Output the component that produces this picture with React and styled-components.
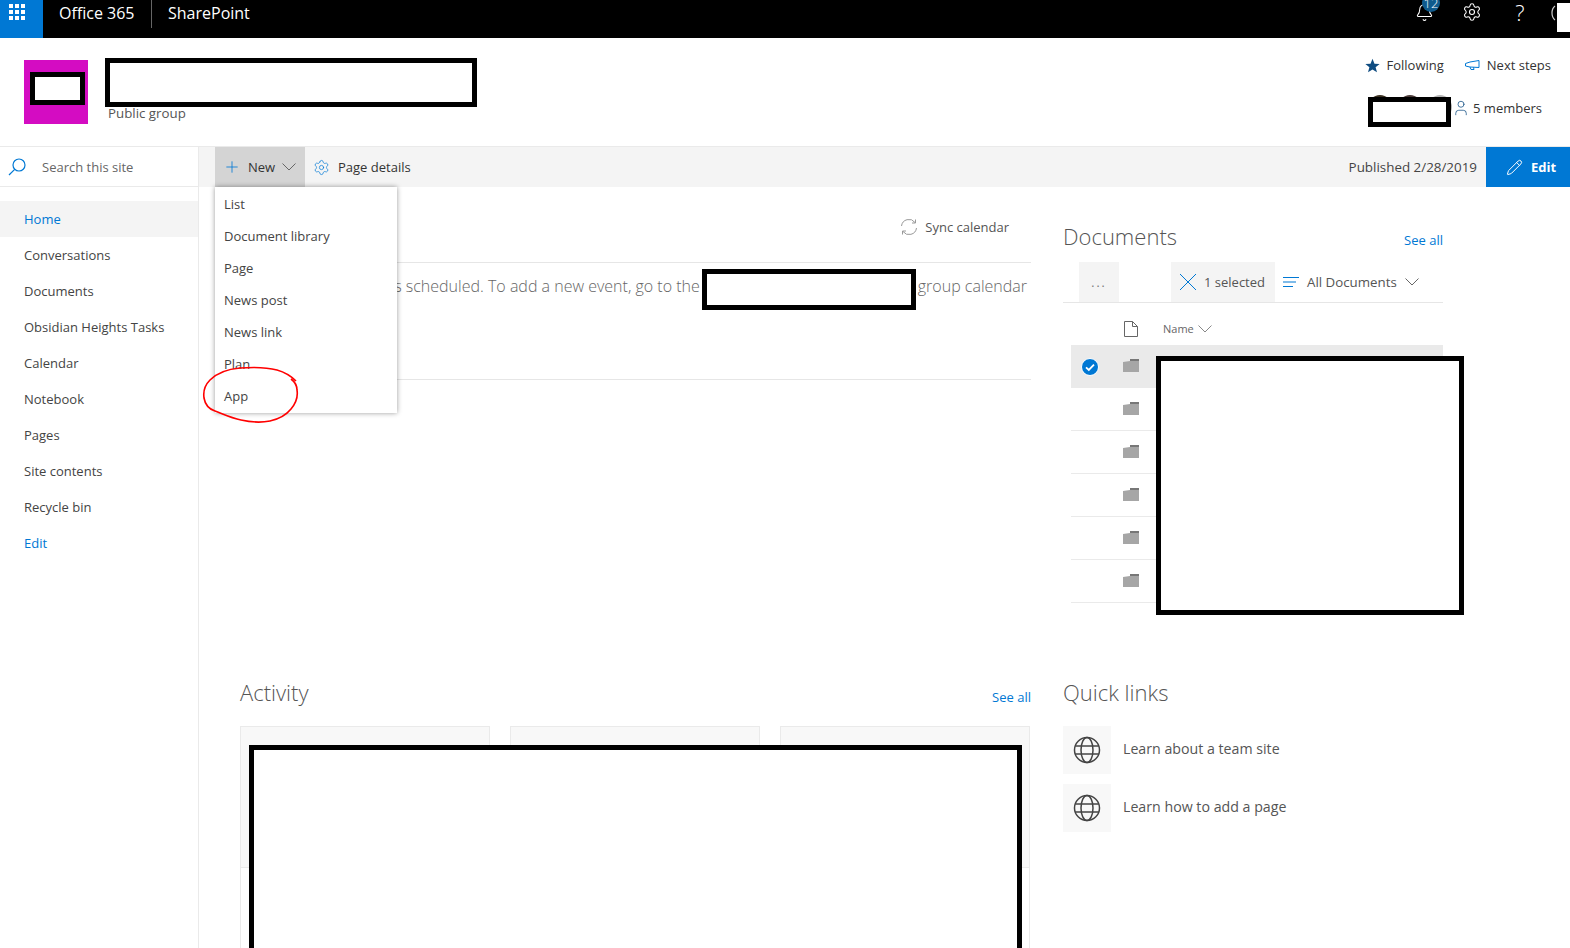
import React from "react";
import styled, { createGlobalStyle } from "styled-components";
import { Plus, Settings, Bell, Pencil, User } from "lucide-react";

const GlobalStyle = createGlobalStyle`
    html, body {
        margin: 0;
        padding: 0;
        background: #fff;
    }
    body {
        font-family: "Open Sans", "Noto Sans", sans-serif;
        color: #333;
    }
`;

const Page = styled.div`
    position: relative;
    width: 1570px;
    height: 948px;
    overflow: hidden;
    display: flex;
    flex-direction: column;
`;

/* suite bar */
const TopBar = styled.header`
    height: 38px;
    flex: none;
    background: #000;
    color: #fff;
    display: flex;
    align-items: stretch;
`;

const Waffle = styled.div`
    width: 43px;
    background: #0078d4;
    display: grid;
    grid-template-columns: repeat(3, 4px);
    grid-auto-rows: 4px;
    gap: 2px;
    padding: 4px 0 0 9px;
    box-sizing: border-box;
    align-content: start;
`;

const Dot = styled.span`
    background: #fff;
`;

const BrandOffice = styled.div`
    margin-left: 16px;
    width: 92px;
    height: 28px;
    line-height: 27px;
    font-size: 16px;
    border-right: 1px solid #666;
`;

const BrandApp = styled.div`
    margin-left: 16px;
    line-height: 27px;
    height: 28px;
    font-size: 16px;
`;

const TopIcons = styled.div`
    margin-left: auto;
    display: flex;
    align-items: flex-start;
`;

const TopIcon = styled.div`
    position: relative;
    width: 48px;
    height: 24px;
    display: flex;
    align-items: center;
    justify-content: center;
    font-size: 22px;
    font-weight: 300;
    line-height: 24px;
`;

const Badge = styled.span`
    position: absolute;
    left: 22px;
    top: -6px;
    width: 18px;
    height: 18px;
    border-radius: 50%;
    background: #0f5a8c;
    color: #fff;
    font-size: 13px;
    line-height: 18px;
    text-align: center;
`;

const AvatarSliver = styled.div`
    width: 13px;
    height: 24px;
    display: flex;
    justify-content: flex-end;
    align-items: flex-start;
    padding: 5px 1px 0 0;
    box-sizing: border-box;
`;

const WhiteBlock = styled.div`
    width: 13px;
    height: 29px;
    margin-top: 3px;
    background: #fff;
`;

/* redaction boxes painted over the screenshot */
const Redaction = styled.div`
    box-sizing: border-box;
    background: #fff;
    border: 5px solid #000;
    flex: none;
`;

const OverlayRedaction = styled(Redaction)`
    position: absolute;
    left: ${(p) => p.$left}px;
    top: ${(p) => p.$top}px;
    width: ${(p) => p.$width}px;
    height: ${(p) => p.$height}px;
`;

/* site header */
const SiteHeader = styled.div`
    height: 109px;
    flex: none;
    box-sizing: border-box;
    border-bottom: 1px solid #eaeaea;
    padding: 22px 19px 0 24px;
    display: flex;
    position: relative;
`;

const Logo = styled.div`
    width: 64px;
    height: 64px;
    background: #d40cc2;
    padding: 12px 0 0 6px;
    box-sizing: border-box;
`;

const LogoBox = styled(Redaction)`
    width: 55px;
    height: 33px;
`;

const SiteTitle = styled.div`
    margin-left: 17px;
    margin-top: -2px;
    display: flex;
    flex-direction: column;
`;

const TitleBox = styled(Redaction)`
    width: 372px;
    height: 49px;
`;

const GroupLabel = styled.div`
    margin-left: 3px;
    font-size: 13.3px;
    line-height: 13px;
    color: #555;
`;

const SiteActions = styled.div`
    margin-left: auto;
    display: flex;
    flex-direction: column;
    align-items: flex-end;
`;

const ActionRow = styled.div`
    display: flex;
    align-items: center;
    height: 20px;
    margin-top: -5px;
`;

const ActionLink = styled.span`
    display: flex;
    align-items: center;
    gap: 7px;
    margin-left: ${(p) => p.$ml || 0}px;
    font-size: 13px;
    color: #333;
`;

const MembersRow = styled.div`
    position: relative;
    display: flex;
    align-items: center;
    height: 20px;
    margin-top: 23px;
    margin-right: 9px;
    font-size: 13px;
    color: #333;
`;

const Avatars = styled.div`
    display: flex;
    gap: 6px;
    align-self: flex-start;
    margin-top: -3px;
`;

const Avatar = styled.span`
    width: 24px;
    height: 24px;
    border-radius: 50%;
    background: ${(p) => p.$color};
`;

const MemberText = styled.span`
    display: flex;
    align-items: center;
    gap: 3px;
    position: relative;
`;

/* body */
const Body = styled.div`
    flex: 1;
    display: grid;
    grid-template-columns: 199px 1fr;
    min-height: 0;
`;

const Sidebar = styled.nav`
    border-right: 1px solid #eaeaea;
`;

const SearchRow = styled.div`
    height: 40px;
    box-sizing: border-box;
    border-bottom: 1px solid #eaeaea;
    display: flex;
    align-items: center;
    padding-left: 7px;
    gap: 15px;
    font-size: 13px;
    color: #666;
`;

const NavList = styled.div`
    margin-top: 14px;
`;

const NavItem = styled.div`
    height: 36px;
    line-height: 36px;
    padding-left: 24px;
    font-size: 13px;
    color: ${(p) => (p.$link ? "#0078d4" : "#444")};
    background: ${(p) => (p.$active ? "#f4f4f4" : "transparent")};
`;

const MainColumn = styled.main`
    position: relative;
    min-width: 0;
`;

const CommandBar = styled.div`
    height: 40px;
    background: #f4f4f4;
    display: flex;
    align-items: stretch;
    padding-left: 16px;
    font-size: 13px;
    color: #333;
`;

const NewButton = styled.div`
    width: 90px;
    box-sizing: border-box;
    background: #d4d4d4;
    display: flex;
    align-items: center;
    padding-left: 8px;
    gap: 7px;
`;

const PageDetails = styled.div`
    display: flex;
    align-items: center;
    gap: 8px;
    margin-left: 8px;
`;

const Published = styled.div`
    margin-left: auto;
    margin-right: 9px;
    display: flex;
    align-items: center;
    font-size: 13.4px;
    color: #444;
`;

const EditButton = styled.div`
    width: 84px;
    background: #0078d4;
    color: #fff;
    font-weight: 700;
    display: flex;
    align-items: center;
    padding-left: 20px;
    box-sizing: border-box;
    gap: 8px;
`;

const NewMenu = styled.div`
    position: absolute;
    left: 16px;
    top: 40px;
    width: 182px;
    height: 226px;
    box-sizing: border-box;
    background: #fff;
    padding-top: 1px;
    box-shadow: 0 0 5px rgba(0, 0, 0, 0.4);
    z-index: 2;
`;

const MenuItem = styled.div`
    height: 32px;
    line-height: 32px;
    padding-left: 9px;
    font-size: 13px;
    color: #444;
`;

const Content = styled.div`
    display: grid;
    grid-template-columns: 791px 380px;
    grid-template-rows: 489px 1fr;
    column-gap: 32px;
    padding-left: 41px;
`;

const EventsHeader = styled.div`
    height: 76px;
    box-sizing: border-box;
    border-bottom: 1px solid #e6e6e6;
    padding: 28px 22px 0 0;
    display: flex;
    justify-content: flex-end;
`;

const SyncLink = styled.span`
    display: flex;
    align-items: center;
    gap: 7px;
    height: 24px;
    font-size: 13px;
    color: #555;
`;

const EventsBody = styled.div`
    height: 117px;
    box-sizing: border-box;
    border-bottom: 1px solid #e6e6e6;
    padding: 6px 4px 0 0;
    display: flex;
    justify-content: flex-end;
    align-items: flex-start;
    overflow: hidden;
    white-space: nowrap;
    font-size: 16px;
    font-weight: 300;
    color: #666;
`;

const EventsText = styled.span`
    line-height: 34px;
`;

const CalendarBox = styled(Redaction)`
    width: 214px;
    height: 41px;
    margin: 0 2px;
`;

const DocsHeader = styled.div`
    height: 75px;
    box-sizing: border-box;
    padding-top: 33px;
    display: flex;
    justify-content: space-between;
    align-items: flex-start;
`;

const SectionTitle = styled.h2`
    margin: 0;
    font-size: 22px;
    line-height: 32px;
    font-weight: 300;
    color: #555;
`;

const SeeAll = styled.a`
    font-size: 13px;
    line-height: 18px;
    margin-top: ${(p) => p.$top || 11}px;
    color: #0078d4;
`;

const DocsToolbar = styled.div`
    height: 41px;
    box-sizing: border-box;
    border-bottom: 1px solid #e6e6e6;
    padding-left: 16px;
    display: flex;
    align-items: stretch;
    font-size: 13px;
    color: #555;
`;

const MoreButton = styled.div`
    width: 40px;
    background: #f4f4f4;
    display: flex;
    align-items: center;
    justify-content: center;
    font-size: 12px;
    letter-spacing: 2px;
    color: #777;
`;

const SelectedChip = styled.div`
    margin-left: 52px;
    width: 104px;
    box-sizing: border-box;
    background: #f4f4f4;
    display: flex;
    align-items: center;
    padding-left: 8px;
    gap: 7px;
`;

const ViewPicker = styled.div`
    margin-left: 8px;
    display: flex;
    align-items: center;
    gap: 8px;
    font-size: 13.3px;
`;

const ListHead = styled.div`
    height: 42px;
    box-sizing: border-box;
    padding-top: 9px;
    display: grid;
    grid-template-columns: 53px 39px 1fr;
    margin-left: 8px;
    align-items: center;
    font-size: 11px;
    color: #666;
`;

const HeadCell = styled.span`
    grid-column: ${(p) => p.$col};
    display: flex;
    align-items: center;
    gap: 4px;
`;

const DocList = styled.div`
    position: relative;
    margin-left: 8px;
`;

const DocRow = styled.div`
    height: 43px;
    box-sizing: border-box;
    display: grid;
    grid-template-columns: 52px 40px 1fr;
    padding-bottom: 2px;
    align-items: center;
    background: ${(p) => (p.$selected ? "#eaeaea" : "transparent")};
    border-bottom: ${(p) => (p.$selected ? "none" : "1px solid #eaeaea")};
`;

const CheckCell = styled.span`
    display: flex;
    padding: 2px 0 0 10px;
`;

const FolderCell = styled.span`
    grid-column: 2;
    display: flex;
`;

const ActivityCards = styled.div`
    position: relative;
    margin-top: 18px;
    display: grid;
    grid-template-columns: repeat(3, 250px);
    column-gap: 20px;
`;

const ActivityCard = styled.div`
    height: 260px;
    box-sizing: border-box;
    border: 1px solid #eaeaea;
`;

const CardPreview = styled.div`
    height: 140px;
    background: #f8f8f8;
    border-bottom: 1px solid #eaeaea;
`;

const SectionHead = styled.div`
    display: flex;
    justify-content: space-between;
    align-items: flex-start;
`;

const QuickList = styled.div`
    margin-top: 18px;
    display: flex;
    flex-direction: column;
    gap: 10px;
`;

const QuickLink = styled.div`
    display: flex;
    align-items: center;
    gap: 12px;
    font-size: 14.2px;
    color: #555;
`;

const QuickLabel = styled.span`
    margin-top: -4px;
`;

const QuickIcon = styled.div`
    width: 48px;
    height: 48px;
    background: #f8f8f8;
    display: flex;
    align-items: center;
    justify-content: center;
`;

const Annotation = styled.svg`
    position: absolute;
    left: 200px;
    top: 360px;
    z-index: 3;
    pointer-events: none;
`;

const FlatChevron = ({ color = "#666", width = 14 }) => (
    <svg width={width} height={width / 2 + 1} viewBox="0 0 14 8" fill="none" stroke={color} strokeWidth="1">
        <path d="M.5.5L7 7l6.5-6.5" />
    </svg>
);

const SearchIcon = () => (
    <svg width="20" height="20" viewBox="0 0 20 20" fill="none" stroke="#0078d4" strokeWidth="1.2">
        <circle cx="12" cy="8" r="6" />
        <path d="M7.7 12.3L2 18" />
    </svg>
);

const StarIcon = () => (
    <svg width="15" height="15" viewBox="0 0 16 16" fill="#0f4c81">
        <path d="M8 .8l2.1 5.2 5.5.3-4.3 3.5 1.5 5.4L8 12.2l-4.8 3 1.5-5.4L.4 6.3 5.9 6z" />
    </svg>
);

const MegaphoneIcon = () => (
    <svg width="16" height="12" viewBox="0 0 16 12" fill="none" stroke="#0078d4" strokeWidth="1">
        <path d="M15 1.5v7L6 8 1.5 7V4.5L6 3z" />
        <path d="M6 8l1 2.5h3L9.5 8.3" />
    </svg>
);

const SyncIcon = () => (
    <svg width="18" height="18" viewBox="0 0 18 18" fill="none" stroke="#999" strokeWidth="1">
        <path d="M1.5 8A7.5 7.5 0 0 1 15 4.5" />
        <path d="M16.5 10A7.5 7.5 0 0 1 3 13.5" />
        <path d="M15.5 1.5v3.5H12M2.5 16.5V13H6" />
    </svg>
);

const CloseIcon = () => (
    <svg width="18" height="18" viewBox="0 0 18 18" fill="none" stroke="#0078d4" strokeWidth="1">
        <path d="M1 1l16 16M17 1L1 17" />
    </svg>
);

const ViewIcon = () => (
    <svg width="16" height="12" viewBox="0 0 16 12" fill="none" stroke="#0078d4" strokeWidth="1.2">
        <path d="M0 1.5h16M0 6h13M0 10.5h10" />
    </svg>
);

const FileIcon = () => (
    <svg width="14" height="16" viewBox="0 0 14 16" fill="none" stroke="#666" strokeWidth="1">
        <path d="M.5.5h8l5 5v10H.5zM8.5.5v5h5" />
    </svg>
);

const FolderIcon = () => (
    <svg width="16" height="13" viewBox="0 0 16 13">
        <path d="M7 0h9v3H7z" fill="#777" />
        <path d="M0 3l7-1v0h9v11H0z" fill="#a6a6a6" />
    </svg>
);

const CheckIcon = () => (
    <svg width="18" height="18" viewBox="0 0 18 18">
        <circle cx="9" cy="9" r="8.5" fill="#0078d4" stroke="#fff" strokeWidth="1" />
        <path d="M5 9.3l2.8 2.6L13 6.6" fill="none" stroke="#fff" strokeWidth="1.8" />
    </svg>
);

const GlobeIcon = () => (
    <svg width="28" height="28" viewBox="0 0 28 28" fill="none" stroke="#444" strokeWidth="1.5">
        <circle cx="14" cy="14" r="12.5" />
        <ellipse cx="14" cy="14" rx="6" ry="12.5" />
        <path d="M2.4 10h23.2M2.4 18h23.2" />
    </svg>
);

const navItems = ["Conversations", "Documents", "Obsidian Heights Tasks", "Calendar", "Notebook", "Pages", "Site contents", "Recycle bin"];
const menuItems = ["List", "Document library", "Page", "News post", "News link", "Plan", "App"];
const folderRows = [false, false, false, false, false];

const App = () => {
    return (
        <Page>
            <GlobalStyle />
            <TopBar>
                <Waffle>
                    {Array.from({ length: 9 }).map((_, i) => (
                        <Dot key={i} />
                    ))}
                </Waffle>
                <BrandOffice>Office 365</BrandOffice>
                <BrandApp>SharePoint</BrandApp>
                <TopIcons>
                    <TopIcon>
                        <Bell size={19} strokeWidth={1.3} />
                        <Badge>12</Badge>
                    </TopIcon>
                    <TopIcon>
                        <Settings size={20} strokeWidth={1.3} />
                    </TopIcon>
                    <TopIcon>?</TopIcon>
                    <AvatarSliver>
                        <svg width="6" height="16" viewBox="0 0 6 16" fill="none" stroke="#ccc" strokeWidth="1.2">
                            <path d="M5 1C1 4 1 12 5 15" />
                        </svg>
                    </AvatarSliver>
                    <WhiteBlock />
                </TopIcons>
            </TopBar>

            <SiteHeader>
                <Logo>
                    <LogoBox />
                </Logo>
                <SiteTitle>
                    <TitleBox />
                    <GroupLabel>Public group</GroupLabel>
                </SiteTitle>
                <SiteActions>
                    <ActionRow>
                        <ActionLink>
                            <StarIcon />
                            Following
                        </ActionLink>
                        <ActionLink $ml={20}>
                            <MegaphoneIcon />
                            Next steps
                        </ActionLink>
                    </ActionRow>
                    <MembersRow>
                        <Avatars>
                            <Avatar $color="#3a3020" />
                            <Avatar $color="#4a3a38" />
                            <Avatar $color="#b5b5b5" />
                        </Avatars>
                        <OverlayRedaction $left={0} $top={-1} $width={83} $height={30} />
                        <MemberText>
                            <User size={18} strokeWidth={1} color="#0f4c81" />
                            5 members
                        </MemberText>
                    </MembersRow>
                </SiteActions>
            </SiteHeader>

            <Body>
                <Sidebar>
                    <SearchRow>
                        <SearchIcon />
                        Search this site
                    </SearchRow>
                    <NavList>
                        <NavItem $active $link>
                            Home
                        </NavItem>
                        {navItems.map((item) => (
                            <NavItem key={item}>{item}</NavItem>
                        ))}
                        <NavItem $link>Edit</NavItem>
                    </NavList>
                </Sidebar>

                <MainColumn>
                    <CommandBar>
                        <NewButton>
                            <Plus size={18} strokeWidth={1.1} color="#0078d4" />
                            New
                            <FlatChevron />
                        </NewButton>
                        <PageDetails>
                            <Settings size={17} strokeWidth={1} color="#0078d4" />
                            Page details
                        </PageDetails>
                        <Published>Published 2/28/2019</Published>
                        <EditButton>
                            <Pencil size={17} strokeWidth={1.4} />
                            Edit
                        </EditButton>
                    </CommandBar>

                    <NewMenu>
                        {menuItems.map((item) => (
                            <MenuItem key={item}>{item}</MenuItem>
                        ))}
                    </NewMenu>

                    <Content>
                        <section>
                            <EventsHeader>
                                <SyncLink>
                                    <SyncIcon />
                                    Sync calendar
                                </SyncLink>
                            </EventsHeader>
                            <EventsBody>
                                <EventsText>There are no events scheduled. To add a new event, go to the</EventsText>
                                <CalendarBox />
                                <EventsText>group calendar</EventsText>
                            </EventsBody>
                        </section>

                        <section>
                            <DocsHeader>
                                <SectionTitle>Documents</SectionTitle>
                                <SeeAll>See all</SeeAll>
                            </DocsHeader>
                            <DocsToolbar>
                                <MoreButton>...</MoreButton>
                                <SelectedChip>
                                    <CloseIcon />
                                    1 selected
                                </SelectedChip>
                                <ViewPicker>
                                    <ViewIcon />
                                    All Documents
                                    <FlatChevron />
                                </ViewPicker>
                            </DocsToolbar>
                            <ListHead>
                                <HeadCell $col={2}>
                                    <FileIcon />
                                </HeadCell>
                                <HeadCell $col={3}>
                                    Name
                                    <FlatChevron color="#888" />
                                </HeadCell>
                            </ListHead>
                            <DocList>
                                <DocRow $selected>
                                    <CheckCell>
                                        <CheckIcon />
                                    </CheckCell>
                                    <FolderCell>
                                        <FolderIcon />
                                    </FolderCell>
                                </DocRow>
                                {folderRows.map((_, i) => (
                                    <DocRow key={i}>
                                        <FolderCell>
                                            <FolderIcon />
                                        </FolderCell>
                                    </DocRow>
                                ))}
                                <OverlayRedaction $left={85} $top={11} $width={308} $height={259} />
                            </DocList>
                        </section>

                        <section>
                            <SectionHead>
                                <SectionTitle>Activity</SectionTitle>
                                <SeeAll $top={12}>See all</SeeAll>
                            </SectionHead>
                            <ActivityCards>
                                <ActivityCard>
                                    <CardPreview />
                                </ActivityCard>
                                <ActivityCard>
                                    <CardPreview />
                                </ActivityCard>
                                <ActivityCard>
                                    <CardPreview />
                                </ActivityCard>
                                <OverlayRedaction $left={9} $top={19} $width={773} $height={260} />
                            </ActivityCards>
                        </section>

                        <section>
                            <SectionTitle>Quick links</SectionTitle>
                            <QuickList>
                                <QuickLink>
                                    <QuickIcon>
                                        <GlobeIcon />
                                    </QuickIcon>
                                    <QuickLabel>Learn about a team site</QuickLabel>
                                </QuickLink>
                                <QuickLink>
                                    <QuickIcon>
                                        <GlobeIcon />
                                    </QuickIcon>
                                    <QuickLabel>Learn how to add a page</QuickLabel>
                                </QuickLink>
                            </QuickList>
                        </section>
                    </Content>
                </MainColumn>
            </Body>

            <Annotation width="110" height="70" viewBox="200 360 110 70" fill="none" stroke="#f00" strokeWidth="1.6">
                <path d="M296 381C290 375 284 372 277 370C266 367 253 367 240 368C228 369 217 373 210 380C205 385 203 391 204 398C205 404 209 409 215 411C223 414 231 418 241 420C250 422 260 423 270 421C279 419 287 414 291 409C296 403 298 396 297 390C297 386 295 382 291 379" />
            </Annotation>
        </Page>
    );
};

export default App;
